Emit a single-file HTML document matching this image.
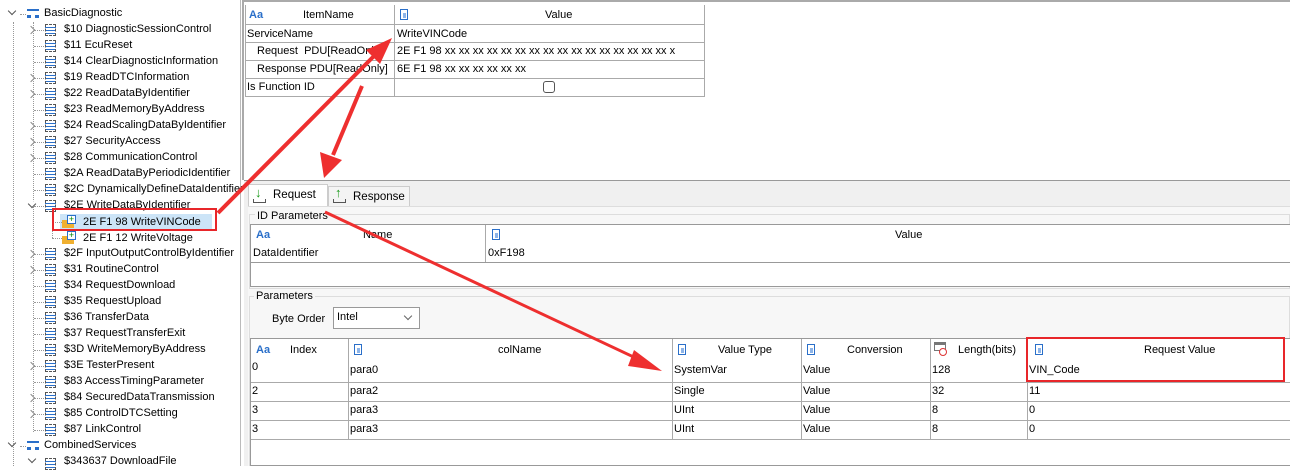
<!DOCTYPE html>
<html><head><meta charset="utf-8"><style>
*{box-sizing:border-box;margin:0;padding:0}
body{width:1290px;height:466px;overflow:hidden;background:#fff;font-family:"Liberation Sans",sans-serif;font-size:11px;color:#000;position:relative}
.a{position:absolute;white-space:nowrap}
.ic{position:absolute;width:11px;height:12px;border:1px dashed #555;background:repeating-linear-gradient(#fff 0 2px,#2a6fc9 2px 3px);}
.cr{position:absolute;width:6px;height:6px;border-right:1.5px solid #888;border-bottom:1.5px solid #888;transform:rotate(-45deg)}
.cd{position:absolute;width:6px;height:6px;border-right:1.5px solid #555;border-bottom:1.5px solid #555;transform:rotate(45deg)}
.hl{position:absolute;border-left:1px dotted #999}
.hh{position:absolute;border-top:1px dotted #999}
.cell{position:absolute;height:19px;line-height:18px;padding-left:2px;border-right:1px solid #aaa;border-bottom:1px solid #aaa;white-space:nowrap;overflow:hidden}
.hash{display:inline-block;width:8px;height:11px;border:1px solid #2a6fc9;position:absolute;background:linear-gradient(#fff 3px,#8db4e8 3px,#8db4e8 8px,#fff 8px);background-size:3px 100%;background-repeat:no-repeat;background-position:2px 0}
.Aa{color:#2a6fc9;font-weight:bold;position:absolute}
.g{position:absolute;background:#aaa}
</style></head><body>
<div class="a" style="left:0;top:0;width:241px;height:466px;border-right:1px solid #bbb"></div>
<div class="hl" style="left:13px;top:22px;height:444px"></div>
<div class="hl" style="left:33px;top:22px;height:410px"></div>
<div class="hl" style="left:52px;top:214px;height:24px"></div>
<div id="tree"></div>
<script>
var items=[["$10 DiagnosticSessionControl",1],["$11 EcuReset",0],["$14 ClearDiagnosticInformation",0],["$19 ReadDTCInformation",1],["$22 ReadDataByIdentifier",1],["$23 ReadMemoryByAddress",0],["$24 ReadScalingDataByIdentifier",1],["$27 SecurityAccess",1],["$28 CommunicationControl",1],["$2A ReadDataByPeriodicIdentifier",0],["$2C DynamicallyDefineDataIdentifier",0],["$2E WriteDataByIdentifier",2],null,null,["$2F InputOutputControlByIdentifier",1],["$31 RoutineControl",1],["$34 RequestDownload",0],["$35 RequestUpload",0],["$36 TransferData",0],["$37 RequestTransferExit",0],["$3D WriteMemoryByAddress",0],["$3E TesterPresent",1],["$83 AccessTimingParameter",0],["$84 SecuredDataTransmission",1],["$85 ControlDTCSetting",1],["$87 LinkControl",0]];
var h='';
function grp(y,t){return '<div class="cd" style="left:9px;top:'+(y+2)+'px"></div><div class="hh" style="left:20px;top:'+(y+8)+'px;width:6px"></div><div class="a" style="left:27px;top:'+(y+3)+'px;width:12px;height:9px;border-top:2px solid #2a6fc9;border-bottom:3px dotted #2a6fc9"></div><div class="a" style="left:44px;top:'+(y+1)+'px">'+t+'</div>';}
h+=grp(6,'BasicDiagnostic');
items.forEach(function(it,i){if(!it)return;var y=22+i*16;
h+='<div class="hh" style="left:34px;top:'+(y+8)+'px;width:10px"></div>';
if(it[1]==1)h+='<div class="cr" style="left:28px;top:'+(y+5)+'px;background:#fff"></div>';
if(it[1]==2)h+='<div class="cd" style="left:29px;top:'+(y+3)+'px;background:#fff"></div>';
h+='<div class="ic" style="left:45px;top:'+(y+2)+'px"></div><div class="a" style="left:64px;top:'+(y+1)+'px">'+it[0]+'</div>';});
h+='<div class="a" style="left:60px;top:214px;width:152px;height:16px;background:#cce4f7"></div>';
[[214,"2E F1 98 WriteVINCode"],[230,"2E F1 12 WriteVoltage"]].forEach(function(t){h+='<div class="hh" style="left:52px;top:'+(t[0]+8)+'px;width:10px"></div><div class="a" style="left:62px;top:'+(t[0]+6)+'px;width:12px;height:8px;background:#f0b030"></div><div class="a" style="left:67px;top:'+(t[0]+1)+'px;width:9px;height:9px;border:1px solid #2a6fc9;background:#fff;color:#080;font-size:9px;line-height:7px;text-align:center">+</div><div class="a" style="left:83px;top:'+(t[0]+2)+'px">'+t[1]+'</div>';});
h+=grp(438,'CombinedServices');
h+='<div class="cd" style="left:29px;top:456px;background:#fff"></div><div class="ic" style="left:45px;top:458px"></div><div class="a" style="left:64px;top:455px">$343637 DownloadFile</div>';
document.getElementById('tree').innerHTML=h;
</script>
<div class="a" style="left:52px;top:208px;width:165px;height:23px;border:2px solid #e8262a"></div>

<div class="a" style="left:242px;top:0;width:1048px;height:180px;border-top:2px solid #aaa;border-left:2px solid #aaa"></div>
<div class="a" style="left:245px;top:5px;width:460px;height:92px;border:1px solid #aaa;border-top:none"></div>
<span class="Aa" style="left:249px;top:9px">Aa</span><span class="a" style="left:303px;top:9px">ItemName</span>
<span class="hash" style="left:400px;top:9px"></span><span class="a" style="left:545px;top:9px">Value</span>
<div class="g" style="left:394px;top:5px;width:1px;height:92px"></div>
<div class="cell" style="left:245px;top:24px;width:150px;border-top:1px solid #aaa">ServiceName</div>
<div class="cell" style="left:395px;top:24px;width:310px;border-top:1px solid #aaa">WriteVINCode</div>
<div class="cell" style="left:245px;top:42px;width:150px;padding-left:12px">Request&nbsp; PDU[ReadOnly]</div>
<div class="cell" style="left:395px;top:42px;width:310px">2E F1 98 xx xx xx xx xx xx xx xx xx xx xx xx xx xx xx xx x</div>
<div class="cell" style="left:245px;top:60px;width:150px;padding-left:12px">Response PDU[ReadOnly]</div>
<div class="cell" style="left:395px;top:60px;width:310px">6E F1 98 xx xx xx xx xx xx</div>
<div class="cell" style="left:245px;top:78px;width:150px">Is Function ID</div>
<div class="cell" style="left:395px;top:78px;width:310px"></div>
<div class="a" style="left:543px;top:81px;width:12px;height:12px;border:1px solid #555;border-radius:3px"></div>

<div class="a" style="left:244px;top:180px;width:1046px;height:286px;background:#f0f0f0;border-top:1px solid #999"></div>
<div class="a" style="left:248px;top:184px;width:80px;height:24px;background:#fff;border:1px solid #ccc;border-bottom:none"></div>
<div class="a" style="left:328px;top:186px;width:82px;height:22px;background:#f4f4f4;border:1px solid #ccc;border-bottom:none"></div>
<div class="a" style="left:255px;top:185px;color:#1a9a1a;font-weight:bold;font-size:13px">&#8595;</div><div class="a" style="left:253px;top:199px;width:13px;height:4px;border:1.5px solid #555;border-top:none"></div>
<div class="a" style="left:273px;top:189px;font-size:11.5px">Request</div>
<div class="a" style="left:335px;top:185px;color:#1a9a1a;font-weight:bold;font-size:13px">&#8593;</div><div class="a" style="left:333px;top:199px;width:13px;height:4px;border:1.5px solid #555;border-top:none"></div>
<div class="a" style="left:353px;top:191px;font-size:11.5px">Response</div>
<div class="a" style="left:248px;top:206px;width:1042px;height:260px;background:#f7f7f7;border-top:1px solid #ddd"></div>
<div class="a" style="left:249px;top:214px;width:1041px;height:75px;border:1px solid #ddd"></div>
<div class="a" style="left:255px;top:210px;background:#f7f7f7;padding:0 2px">ID Parameters</div>
<div class="a" style="left:250px;top:224px;width:1040px;height:63px;background:#fff;border:1px solid #999;border-right:none"></div>
<span class="Aa" style="left:256px;top:229px">Aa</span><span class="a" style="left:363px;top:229px">Name</span>
<span class="hash" style="left:492px;top:229px"></span><span class="a" style="left:895px;top:229px">Value</span>
<div class="g" style="left:485px;top:225px;width:1px;height:37px"></div>
<div class="a" style="left:251px;top:262px;width:1039px;height:1px;background:#999"></div>
<div class="a" style="left:253px;top:247px">DataIdentifier</div><div class="a" style="left:488px;top:247px">0xF198</div>

<div class="a" style="left:249px;top:296px;width:1041px;height:170px;border:1px solid #ddd"></div>
<div class="a" style="left:254px;top:290px;background:#f7f7f7;padding:0 2px">Parameters</div>
<div class="a" style="left:272px;top:313px">Byte Order</div>
<div class="a" style="left:333px;top:307px;width:87px;height:22px;background:#fff;border:1px solid #999;padding:3px 3px">Intel<span class="cd" style="left:71px;top:5px;border-color:#666"></span></div>

<div class="a" style="left:250px;top:338px;width:1040px;height:128px;background:#fff;border:1px solid #999;border-right:none"></div>
<span class="Aa" style="left:256px;top:344px">Aa</span><span class="a" style="left:290px;top:344px">Index</span>
<span class="hash" style="left:354px;top:344px"></span><span class="a" style="left:498px;top:344px">colName</span>
<span class="hash" style="left:678px;top:344px"></span><span class="a" style="left:718px;top:344px">Value Type</span>
<span class="hash" style="left:807px;top:344px"></span><span class="a" style="left:847px;top:344px">Conversion</span>
<span class="a" style="left:934px;top:342px;width:12px;height:9px;border:1px solid #777;border-top:3px solid #777"></span><span class="a" style="left:939px;top:348px;width:8px;height:8px;border:1.5px solid #d33;border-radius:50%;background:#fff"></span><span class="a" style="left:958px;top:344px">Length(bits)</span>
<span class="hash" style="left:1035px;top:344px"></span><span class="a" style="left:1144px;top:344px">Request Value</span>
<div id="grid"></div>
<script>
var cols=[250,348,672,801,930,1027];
var rows=[[360,22,["0","para0","SystemVar","Value","128","VIN_Code"]],[382,19,["2","para2","Single","Value","32","11"]],[401,19,["3","para3","UInt","Value","8","0"]],[420,19,["3","para3","UInt","Value","8","0"]]];
var g='';
cols.slice(1).forEach(function(x){g+='<div class="g" style="left:'+x+'px;top:339px;width:1px;height:100px"></div>';});
rows.forEach(function(r){g+='<div class="g" style="left:251px;top:'+(r[0]+r[1])+'px;width:1039px;height:1px"></div>';
r[2].forEach(function(t,i){var yy=r[0]+(r[1]==22?4:3);if(i==0&&r[1]==22)yy=r[0]+1;g+='<div class="a" style="left:'+(cols[i]+2)+'px;top:'+yy+'px">'+t+'</div>';});});
document.getElementById('grid').innerHTML=g;
</script>
<div class="a" style="left:1026px;top:337px;width:259px;height:45px;border:2px solid #e8262a"></div>

<svg class="a" style="left:0;top:0" width="1290" height="466">
<g fill="#ee2f2f" stroke="#ee2f2f">
<line x1="218" y1="213" x2="375" y2="55" stroke-width="4"/>
<polygon points="392,38 366,50 380,64" stroke="none"/>
<line x1="362" y1="86" x2="333" y2="155" stroke-width="4"/>
<polygon points="324,178 320,152 342,160" stroke="none"/>
<line x1="325" y1="212" x2="640" y2="360" stroke-width="3"/>
<polygon points="662,371 634,350 628,366" stroke="none"/>
</g></svg>
</body></html>
